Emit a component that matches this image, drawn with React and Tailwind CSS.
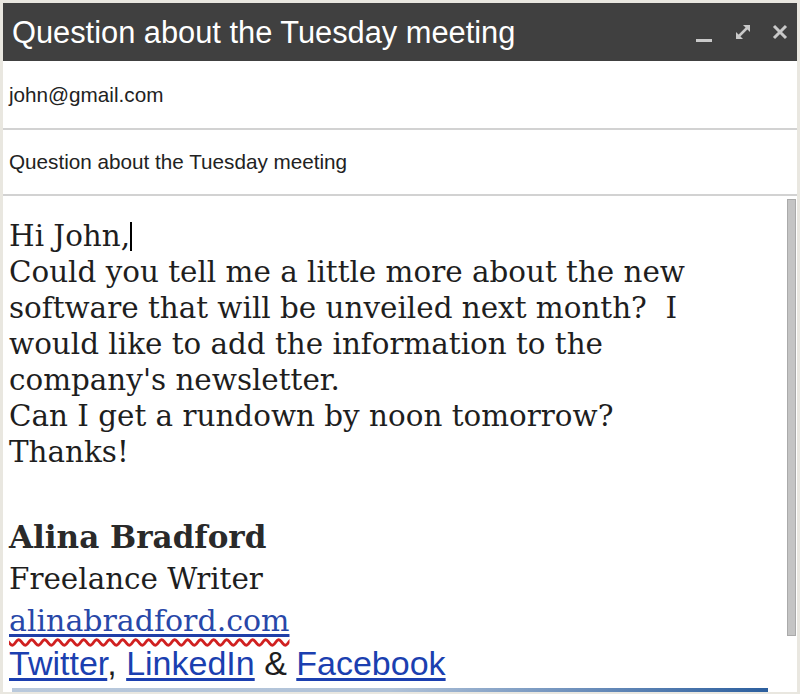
export default function App() {
  const serif = { fontFamily: '"DejaVu Serif", Georgia, serif' };
  return (
    <div className="w-[800px] h-[694px] bg-[#e9e7e0] pt-[3px] pl-[3px] pr-[3px] overflow-hidden" style={{ fontFamily: '"Liberation Sans", Arial, sans-serif' }}>
      <div className="flex flex-col bg-white h-[689px]">
        <div className="h-[58px] bg-[#404040] flex items-center pl-[9px] shrink-0">
          <p className="text-[30.8px] text-white flex-1 leading-none pt-[2px]">Question about the Tuesday meeting</p>
          <div className="flex items-center text-[#c9c9c9]">
            <svg width="16" height="18" viewBox="0 0 16 18" className="mr-[22px] mt-[8px]">
              <rect x="0" y="12" width="16" height="3" fill="currentColor" />
            </svg>
            <svg width="18" height="18" viewBox="0 0 18 18" className="mr-[20px]">
              <path d="M3 15 L15 3" stroke="currentColor" strokeWidth="2.5" />
              <path d="M9 2 H16 V9 Z" fill="currentColor" />
              <path d="M2 9 V16 H9 Z" fill="currentColor" />
            </svg>
            <svg width="16" height="16" viewBox="0 0 16 16" className="mr-[9px]">
              <path d="M2 2 L14 14 M14 2 L2 14" stroke="currentColor" strokeWidth="3" />
            </svg>
          </div>
        </div>
        <div className="h-[69px] border-b-2 border-[#d2d2d2] flex items-center pl-[6px] shrink-0">
          <p className="text-[20.7px] text-[#222]">john@gmail.com</p>
        </div>
        <div className="h-[66px] border-b-2 border-[#d2d2d2] flex items-center pl-[6px] shrink-0">
          <p className="text-[20.7px] text-[#222]">Question about the Tuesday meeting</p>
        </div>
        <div className="flex flex-1">
          <div className="flex-1 flex flex-col pl-[6px] pt-[22px] text-[#1e1e1e]">
            <div style={serif} className="text-[29.4px] leading-[36px] whitespace-nowrap">
              <p>Hi John,<span className="inline-block w-[1.5px] h-[29px] bg-black align-[-5px]"></span></p>
              <p>Could you tell me a little more about the new<br />software that will be unveiled next month?&nbsp; I<br />would like to add the information to the<br />company's newsletter.</p>
              <p>Can I get a rundown by noon tomorrow?</p>
              <p>Thanks!</p>
            </div>
            <div style={serif} className="text-[29.4px] leading-[42px] mt-[46px]">
              <p className="font-bold text-[31px] text-[#2a2a2a]">Alina Bradford</p>
              <p>Freelance Writer</p>
              <p>
                <span className="underline decoration-wavy decoration-[#d02020] underline-offset-[7px]">
                  <span className="underline decoration-[#1f3fa8] text-[#2847a8] underline-offset-[3px] text-[30px]">alinabradford.com</span>
                </span>
              </p>
            </div>
            <p className="text-[34px] leading-[43px]">
              <span className="underline text-[#1b3fb0] decoration-[#1b3fb0] underline-offset-[3px]">Twitter</span>,{" "}
              <span className="underline text-[#1b3fb0] decoration-[#1b3fb0] underline-offset-[3px]">LinkedIn</span> &amp;{" "}
              <span className="underline text-[#1b3fb0] decoration-[#1b3fb0] underline-offset-[3px]">Facebook</span>
            </p>
            <div className="mt-auto ml-[3px] w-[756px] h-[4px] bg-gradient-to-r from-[#b9c9dc] via-[#b0c2d8] to-[#2c5f9e]"></div>
          </div>
          <div className="w-[10px] pt-[3px]">
            <div className="h-[437px] w-[9px] bg-[#c4c4c4] border border-[#aaaaaa]"></div>
          </div>
        </div>
      </div>
    </div>
  );
}
